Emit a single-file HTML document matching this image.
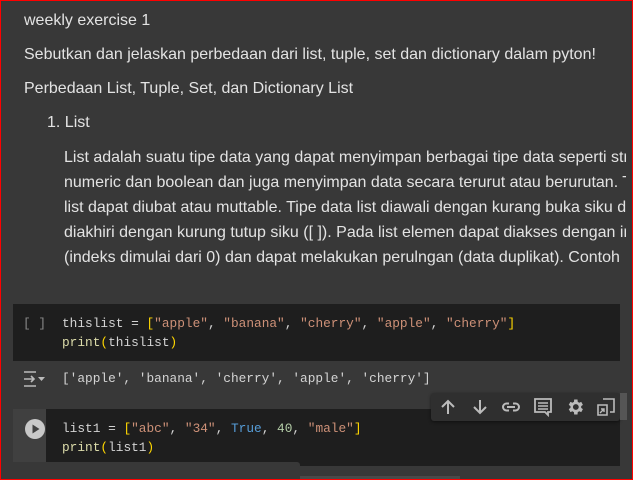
<!DOCTYPE html>
<html><head><style>
*{margin:0;padding:0;box-sizing:border-box}
body{width:633px;height:480px;overflow:hidden;background:#383838;position:relative;font-family:"Liberation Sans",sans-serif;color:#e3e3e3}
.frame{position:absolute;inset:0;border:1px solid #f00;pointer-events:none;z-index:10}
.wrap{position:absolute;left:0;top:0;width:626px;height:300px;overflow:hidden}
.t{position:absolute;left:24px;font-size:16px;white-space:nowrap;line-height:20px}
.p{position:absolute;left:64px;font-size:16px;white-space:nowrap;line-height:20px}
.cell{position:absolute;left:13px;width:607px;background:#1e1e1e}
.code{position:absolute;font-family:"Liberation Mono",monospace;font-size:12.8px;line-height:19px;white-space:pre;color:#d4d4d4}
.s{color:#ce9178}.b{color:#ffd700}.k{color:#569cd6}.n{color:#b5cea8}.f{color:#dcdcaa}
.tb{position:absolute;left:431px;top:393px;width:189px;height:28px;background:#2f2f2f;border-radius:3px;box-shadow:0 1px 3px rgba(0,0,0,.5)}
.tb svg{position:absolute;top:4px}
</style></head><body>
<div class="frame"></div>
<div class="wrap">
<div class="t" style="top:11px">weekly exercise 1</div>
<div class="t" style="top:45px">Sebutkan dan jelaskan perbedaan dari list, tuple, set dan dictionary dalam pyton!</div>
<div class="t" style="top:79px">Perbedaan List, Tuple, Set, dan Dictionary List</div>
<div class="t" style="top:113px;left:47px">1. List</div>
<div class="p" style="top:148px">List adalah suatu tipe data yang dapat menyimpan berbagai tipe data seperti string,</div>
<div class="p" style="top:173px">numeric dan boolean dan juga menyimpan data secara terurut atau berurutan. Tipe</div>
<div class="p" style="top:198px">list dapat diubat atau muttable. Tipe data list diawali dengan kurang buka siku dan</div>
<div class="p" style="top:223px">diakhiri dengan kurung tutup siku ([ ]). Pada list elemen dapat diakses dengan indeks</div>
<div class="p" style="top:248px">(indeks dimulai dari 0) dan dapat melakukan perulngan (data duplikat). Contoh</div>
</div>

<div class="cell" style="top:304px;height:57px"></div>
<div class="code" style="left:23px;top:314px;color:#888">[ ]</div>
<div class="code" style="left:62px;top:314px">thislist = <span class="b">[</span><span class="s">"apple"</span>, <span class="s">"banana"</span>, <span class="s">"cherry"</span>, <span class="s">"apple"</span>, <span class="s">"cherry"</span><span class="b">]</span>
<span class="f">print</span><span class="b">(</span>thislist<span class="b">)</span></div>
<svg style="position:absolute;left:23px;top:370px" width="24" height="18" viewBox="0 0 24 18"><g stroke="#bbb" stroke-width="1.6" fill="none"><path d="M1 2h12M1 16h12M1 9h10M8 6l3 3-3 3"/></g><path d="M15 7h7l-3.5 4z" fill="#bbb"/></svg>
<div class="code" style="left:62px;top:369px">['apple', 'banana', 'cherry', 'apple', 'cherry']</div>

<div class="cell" style="top:409px;height:57px"></div>
<div style="position:absolute;left:13px;top:409px;width:33px;height:57px;background:#404040"></div>
<svg style="position:absolute;left:24px;top:418px" width="22" height="22" viewBox="0 0 22 22"><circle cx="11" cy="11" r="10" fill="#c8c8c8"/><path d="M8.5 6.5v9l7-4.5z" fill="#404040"/></svg>
<div class="code" style="left:62px;top:419px">list1 = <span class="b">[</span><span class="s">"abc"</span>, <span class="s">"34"</span>, <span class="k">True</span>, <span class="n">40</span>, <span class="s">"male"</span><span class="b">]</span>
<span class="f">print</span><span class="b">(</span>list1<span class="b">)</span></div>

<div class="tb">
<svg style="left:7px" width="20" height="20" viewBox="0 0 20 20"><path d="M10 17V4M4 10l6-6 6 6" stroke="#bbb" stroke-width="2" fill="none"/></svg>
<svg style="left:39px" width="20" height="20" viewBox="0 0 20 20"><path d="M10 3v13M4 10l6 6 6-6" stroke="#bbb" stroke-width="2" fill="none"/></svg>
<svg style="left:70px" width="20" height="20" viewBox="0 0 20 20"><rect x="2" y="6.5" width="16" height="7" rx="3.5" stroke="#bbb" stroke-width="2" fill="none"/><path d="M6 10h8" stroke="#bbb" stroke-width="2"/><rect x="8" y="5" width="4" height="3" fill="#2f2f2f"/><rect x="8" y="12" width="4" height="3" fill="#2f2f2f"/></svg>
<svg style="left:102px" width="20" height="20" viewBox="0 0 20 20"><path d="M2 2h16v13h-3v3l-3-3H2z" stroke="#bbb" stroke-width="1.8" fill="none"/><path d="M5 6h10M5 9h10M5 12h10" stroke="#bbb" stroke-width="1.5"/></svg>
<svg style="left:134px" width="20" height="20" viewBox="0 0 24 24"><path fill="#bbb" d="M19.4 13a7.5 7.5 0 000-2l2.1-1.6-2-3.5-2.5 1a7 7 0 00-1.7-1L15 3h-4l-.3 2.9a7 7 0 00-1.7 1l-2.5-1-2 3.5L6.6 11a7.5 7.5 0 000 2l-2.1 1.6 2 3.5 2.5-1a7 7 0 001.7 1L11 21h4l.3-2.9a7 7 0 001.7-1l2.5 1 2-3.5zM13 15.5a3.5 3.5 0 110-7 3.5 3.5 0 010 7z"/></svg>
<svg style="left:165px" width="20" height="20" viewBox="0 0 20 20"><path d="M7 2h11v13H14M2 8h9v10H2z" stroke="#bbb" stroke-width="1.6" fill="none"/><path d="M4 16l4-4M5 12h3v3" stroke="#bbb" stroke-width="1.4" fill="none"/></svg>
</div>
<div style="position:absolute;left:620px;top:393px;width:7px;height:27px;background:#555"></div>
<div style="position:absolute;left:0;top:462px;width:300px;height:18px;background:#383838;border-radius:3px"></div>
<div style="position:absolute;left:300px;top:476px;width:160px;height:4px;background:#4a4a4a"></div>
</body></html>
